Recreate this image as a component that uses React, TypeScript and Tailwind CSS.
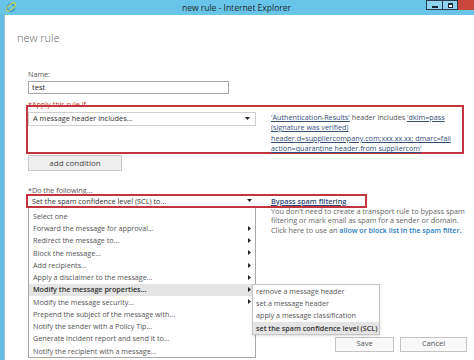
import React from 'react';

const actions: { label: string; sub: boolean; active?: boolean }[] = [
  { label: 'Select one', sub: false },
  { label: 'Forward the message for approval...', sub: true },
  { label: 'Redirect the message to...', sub: true },
  { label: 'Block the message...', sub: true },
  { label: 'Add recipients...', sub: true },
  { label: 'Apply a disclaimer to the message...', sub: true },
  { label: 'Modify the message properties...', sub: true, active: true },
  { label: 'Modify the message security...', sub: true },
  { label: 'Prepend the subject of the message with...', sub: false },
  { label: 'Notify the sender with a Policy Tip...', sub: false },
  { label: 'Generate incident report and send it to...', sub: false },
  { label: 'Notify the recipient with a message...', sub: false },
];

const subActions = [
  'remove a message header',
  'set a message header',
  'apply a message classification',
  'set the spam confidence level (SCL)',
];

const DownArrow = () => (
  <svg width="5" height="3" viewBox="0 0 5 3" className="shrink-0">
    <polygon points="0,0 5,0 2.5,3" fill="#222" />
  </svg>
);

const RightArrow = () => (
  <svg width="3" height="5" viewBox="0 0 3 5" className="shrink-0">
    <polygon points="0,0 3,2.5 0,5" fill="#222" />
  </svg>
);

const IeIcon = () => (
  <svg width="12" height="12" viewBox="0 0 12 12">
    <circle cx="6" cy="6.5" r="3.6" fill="none" stroke="#3a8fd0" strokeWidth="1.6" />
    <ellipse cx="6" cy="6" rx="5.5" ry="2.4" transform="rotate(-40 6 6)" fill="none" stroke="#c7d84a" strokeWidth="1.1" />
  </svg>
);

export default function App() {
  return (
    <div className="w-[474px] h-[360px] overflow-hidden bg-white flex flex-col font-['Open_Sans',sans-serif]">
      {/* title bar */}
      <div className="h-[15px] bg-[#69c5e8] flex items-start shrink-0">
        <div className="ml-[5px] mt-[1px]">
          <IeIcon />
        </div>
        <div className="flex-1 text-center pl-[30px] text-[8.5px] leading-[15px] text-[#1d2a33]">
          new rule - Internet Explorer
        </div>
        <div className="flex h-[10px]">
          <div className="w-[17px] h-[10px] border border-[#2c3e50] bg-[#8fd3ee] flex items-end justify-center pb-[1px]">
            <div className="w-[6px] h-[2px] bg-[#1b2a38]" />
          </div>
          <div className="w-[15px] h-[10px] border border-l-0 border-[#2c3e50] bg-[#8fd3ee] flex items-center justify-center">
            <div className="w-[5px] h-[5px] border border-t-2 border-[#1b2a38] bg-white" />
          </div>
          <div className="w-[16px] h-[10px] bg-[#c9463d]" />
        </div>
      </div>

      <div className="flex flex-1">
        <div className="w-[5px] bg-[#62bde2] border-r border-[#9bbccd]" />
        <div className="flex-1 flex flex-col">
          <div className="pl-[12px] mt-[15px] text-[11px] leading-[15px] font-light text-[#666]">new rule</div>

          <div className="pl-[21px] flex flex-col">
            <div className="ml-[2px] mt-[23.5px] text-[7.2px] leading-[10px] text-[#555]">Name:</div>
            <div className="ml-[2px] mt-[2px] w-[201px] h-[13px] border border-[#a9a9a9] pl-[3px] text-[7.5px] leading-[11px] text-[#222]">
              test
            </div>

            <div className="ml-[2px] mt-[5px] text-[7.2px] leading-[10px] text-[#c0392b]">*Apply this rule if...</div>
            <div className="mt-[-4px] w-[438px] h-[49px] border-2 border-[#c3343f] flex items-start pt-[5px]">
              <div className="w-[228px] h-[14px] border border-[#cfcfcf] flex items-center justify-between pl-[4px] pr-[5px] text-[7.4px] text-[#333]">
                <span>A message header includes...</span>
                <DownArrow />
              </div>
              <div className="ml-[15px] text-[7.2px] leading-[10.6px] text-[#555] whitespace-nowrap">
                <div>
                  <span className="text-[#34507a] underline">'Authentication-Results'</span> header includes{' '}
                  <span className="text-[#34507a] underline">'dkim=pass</span>
                </div>
                <div className="text-[#34507a] underline">(signature was verified)</div>
                <div className="text-[#34507a] underline">header.d=suppliercompany.com;xxx.xx.xx; dmarc=fail</div>
                <div className="text-[#34507a] underline">action=quarantine header.from suppliercom'</div>
              </div>
            </div>

            <div className="ml-[2px] mt-[1px] w-[94px] h-[16px] bg-[#efefef] border border-[#cacaca] flex items-center justify-center text-[8px] text-[#444]">
              add condition
            </div>

            <div className="ml-[2px] mt-[14px] text-[7.2px] leading-[10px] text-[#555]">*Do the following...</div>
            <div className="mt-[-1px] w-[341px] h-[14px] border-2 border-[#c3343f] flex items-center">
              <div className="w-[228px] flex items-center justify-between pl-[4px] pr-[4px] text-[7.3px] leading-[10px] text-[#333]">
                <span>Set the spam confidence level (SCL) to...</span>
                <DownArrow />
              </div>
              <div className="ml-[15px] text-[7.3px] leading-[10px] font-semibold text-[#2f4a75] underline">
                Bypass spam filtering
              </div>
            </div>

            <div className="ml-[2px] flex h-[150px]">
              <div className="relative w-[228px] h-[150px] border border-t-0 border-[#a8a8a8] pt-[2.5px]">
                {actions.map((a) => (
                  <div
                    key={a.label}
                    className={`h-[12.27px] flex items-center justify-between pl-[4px] pr-[4px] text-[7.2px] ${
                      a.active ? 'bg-[#e4e4e4] font-semibold text-[#333]' : 'text-[#555]'
                    }`}
                  >
                    <span>{a.label}</span>
                    {a.sub && <RightArrow />}
                  </div>
                ))}

                <div className="absolute left-[223px] top-[76px] w-[128px] h-[51px] bg-white border border-[#c6c6c6] shadow-sm pt-[0.5px]">
                  {subActions.map((s, i) => (
                    <div
                      key={s}
                      className={`h-[12.27px] flex items-center pl-[3px] text-[7.2px] ${
                        i === 3 ? 'bg-[#e4e4e4] font-semibold text-[#333]' : 'text-[#555]'
                      }`}
                    >
                      {s}
                    </div>
                  ))}
                </div>
              </div>

              <div className="ml-[15px] w-[197px] flex flex-col">
                <div className="mt-[-1px] text-[7.3px] leading-[9.6px] text-[#666] whitespace-nowrap">
                  <div>You don't need to create a transport rule to bypass spam</div>
                  <div>filtering or mark email as spam for a sender or domain.</div>
                  <div>
                    Click here to use an{' '}
                    <span className="text-[#1f7bc2] font-semibold text-[7.1px]">allow or block list in the spam filter.</span>
                  </div>
                </div>
                <div className="mt-auto mb-[6px] flex justify-end gap-[6px] pr-[1px]">
                  <div className="w-[59px] h-[15px] bg-[#f9f9f9] border border-[#c4c4c4] flex items-center justify-center text-[7.5px] text-[#555]">
                    Save
                  </div>
                  <div className="w-[67px] h-[15px] bg-[#f9f9f9] border border-[#c4c4c4] flex items-center justify-center text-[7.5px] text-[#555]">
                    Cancel
                  </div>
                </div>
              </div>
            </div>
          </div>
        </div>
      </div>
    </div>
  );
}
